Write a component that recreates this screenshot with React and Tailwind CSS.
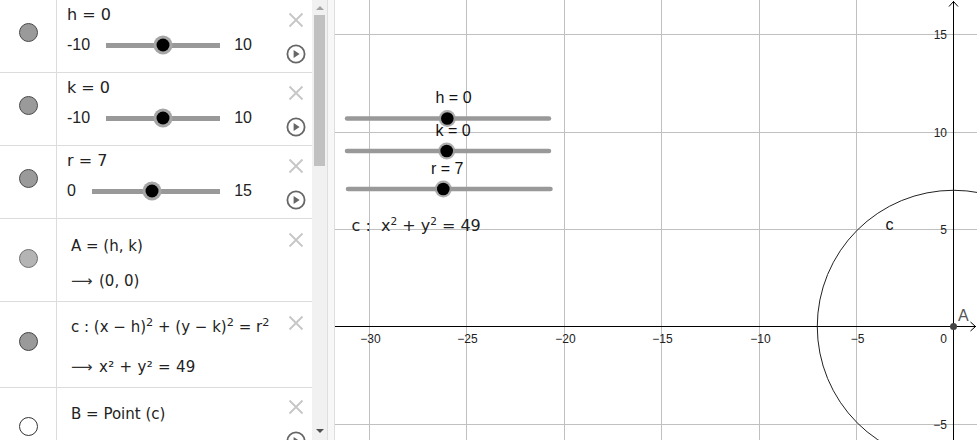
import React from 'react';

const sliders = [
  { name: 'h', value: 0, min: -10, max: 10 },
  { name: 'k', value: 0, min: -10, max: 10 },
  { name: 'r', value: 7, min: 0, max: 15 },
];

const Marble = ({ className }) => (
  <div className={`h-[19px] w-[19px] rounded-full border ${className}`} />
);

const CloseIcon = () => (
  <svg width="16" height="16" viewBox="0 0 16 16">
    <path d="M1.5 1.5 L14.5 14.5 M14.5 1.5 L1.5 14.5" stroke="#c6c6c6" strokeWidth="1.8" />
  </svg>
);

const PlayIcon = () => (
  <svg width="20" height="20" viewBox="0 0 20 20">
    <circle cx="10" cy="10" r="8.6" fill="none" stroke="#666" strokeWidth="1.8" />
    <path d="M7.6 6 L13.6 10 L7.6 14 Z" fill="#666" />
  </svg>
);

const SliderRow = ({ s }) => {
  const pct = ((s.value - s.min) / (s.max - s.min)) * 100;
  return (
    <div className="flex h-[73px] shrink-0 border-b border-[#dcdcdc]">
      <div className="flex w-[57px] shrink-0 justify-center border-r border-[#dcdcdc] pt-[23px] pl-[1px]">
        <Marble className="border-[#4a4a4a] bg-[#9a9a9a]" />
      </div>
      <div className="flex-1 pl-[10px] pt-[5px] text-[#222]">
        <div className="font-['DejaVu_Sans',sans-serif] text-[16px] leading-[20px]">
          {s.name} = {s.value}
        </div>
        <div className="mt-[10px] flex h-[20px] w-[185px] items-center font-['Liberation_Sans',Arial,sans-serif] text-[16px] leading-[20px]">
          <span>{s.min}</span>
          <div className="relative ml-[16px] mr-[14px] h-[5px] flex-1 bg-[#999]">
            <div
              className="absolute top-1/2 h-[13px] w-[13px] -translate-x-1/2 -translate-y-1/2 rounded-full bg-black ring-[3px] ring-[#a6a6a6]"
              style={{ left: `${pct}%` }}
            />
          </div>
          <span>{s.max}</span>
        </div>
      </div>
      <div className="flex w-[32px] shrink-0 flex-col items-center pt-[12px]">
        <CloseIcon />
        <div className="mt-[16px]">
          <PlayIcon />
        </div>
      </div>
    </div>
  );
};

const math = "font-['DejaVu_Sans',sans-serif] text-[15px] leading-[20px] text-[#222]";

const Arrow = () => (
  <span className="inline-block w-[28px] text-[#333]">⟶</span>
);

const AlgebraView = () => (
  <div className="flex w-[312px] shrink-0 flex-col overflow-hidden bg-white">
    {sliders.map((s) => (
      <SliderRow key={s.name} s={s} />
    ))}

    <div className="flex h-[83px] shrink-0 border-b border-[#dcdcdc]">
      <div className="flex w-[57px] shrink-0 justify-center border-r border-[#dcdcdc] pt-[30px] pl-[1px]">
        <Marble className="border-[#707070] bg-[#b4b4b4]" />
      </div>
      <div className={`flex-1 pl-[14px] pt-[17px] ${math}`}>
        <div>A = (h, k)</div>
        <div className="mt-[15px]">
          <Arrow />(0, 0)
        </div>
      </div>
      <div className="flex w-[32px] shrink-0 flex-col items-center pt-[13px]">
        <CloseIcon />
      </div>
    </div>

    <div className="flex h-[86px] shrink-0 border-b border-[#dcdcdc]">
      <div className="flex w-[57px] shrink-0 justify-center border-r border-[#dcdcdc] pt-[30px] pl-[1px]">
        <Marble className="border-[#444] bg-[#9a9a9a]" />
      </div>
      <div className={`flex-1 pl-[14px] pt-[15px] ${math}`}>
        <div>
          c : (x − h)<sup>2</sup> + (y − k)<sup>2</sup> = r<sup>2</sup>
        </div>
        <div className="mt-[20px] tracking-[0.3px]">
          <Arrow />x² + y² = 49
        </div>
      </div>
      <div className="flex w-[32px] shrink-0 flex-col items-center pt-[13px]">
        <CloseIcon />
      </div>
    </div>

    <div className="flex h-[90px] shrink-0">
      <div className="flex w-[57px] shrink-0 justify-center border-r border-[#dcdcdc] pt-[29px] pl-[1px]">
        <Marble className="border-[#333] bg-white" />
      </div>
      <div className={`flex-1 pl-[14px] pt-[16px] ${math}`}>
        <div>B = Point (c)</div>
      </div>
      <div className="flex w-[32px] shrink-0 flex-col items-center pt-[11px]">
        <CloseIcon />
        <div className="mt-[16px]">
          <PlayIcon />
        </div>
      </div>
    </div>
  </div>
);

const Scrollbar = () => (
  <div className="flex w-[15px] shrink-0 flex-col items-center bg-[#f1f1f1]">
    <div className="mt-[6px] h-0 w-0 border-x-[4px] border-b-[4px] border-x-transparent border-b-[#a3a3a3]" />
    <div className="mt-[5px] h-[151px] w-[11px] bg-[#c1c1c1]" />
    <div className="mt-auto mb-[7px] h-0 w-0 border-x-[4px] border-t-[4px] border-x-transparent border-t-[#505050]" />
  </div>
);

// graphics view coordinates
const OX = 618.5;
const OY = 326.5;
const U = 19.46;
const vx = [34, 131, 229, 326, 424, 521];
const xl = ['−30', '−25', '−20', '−15', '−10', '−5'];
const hy = [34, 132, 229, 424];
const yl = ['15', '10', '5', '−5'];

const GSlider = ({ y, x1, x2, tx, label, lx, ly }) => (
  <g>
    <line x1={x1} y1={y} x2={x2} y2={y} stroke="#999" strokeWidth="4.5" strokeLinecap="round" />
    <circle cx={tx} cy={y} r="8.5" fill="#9a9a9a" opacity="0.8" />
    <circle cx={tx} cy={y} r="6.3" fill="#000" />
    <text x={lx} y={ly} fontSize="16" fill="#111" fontFamily="'Liberation Sans', Arial, sans-serif">
      {label}
    </text>
  </g>
);

const GraphicsView = () => (
  <div className="flex-1 overflow-hidden bg-white">
    <svg width="642" height="440" viewBox="0 0 642 440">
      {vx.map((x) => (
        <line key={'v' + x} x1={x + 0.5} y1="0" x2={x + 0.5} y2="440" stroke="#c0c0c0" strokeWidth="1" />
      ))}
      {hy.map((y) => (
        <line key={'h' + y} x1="0" y1={y + 0.5} x2="642" y2={y + 0.5} stroke="#c0c0c0" strokeWidth="1" />
      ))}

      <line x1="0" y1={OY} x2="641" y2={OY} stroke="#000" strokeWidth="1" />
      <line x1={OX} y1="1" x2={OX} y2="440" stroke="#000" strokeWidth="1" />
      <path d={`M${OX - 4.5} 6.5 L${OX} 1.5 L${OX + 4.5} 6.5`} fill="none" stroke="#000" strokeWidth="1" />
      <path d="M635.5 322 L640.5 326.5 L635.5 331" fill="none" stroke="#000" strokeWidth="1" />

      <g fontFamily="'Liberation Sans', Arial, sans-serif" fontSize="12" fill="#222">
        {vx.map((x, i) => (
          <text key={'xl' + x} x={x + 1.5} y="343" textAnchor="middle">
            {xl[i]}
          </text>
        ))}
        <text x="608.5" y="343" textAnchor="middle">0</text>
        {hy.map((y, i) => (
          <text key={'yl' + y} x="612" y={y + 5} textAnchor="end">
            {yl[i]}
          </text>
        ))}
      </g>

      <circle cx={OX} cy={OY} r={7 * U} fill="none" stroke="#222" strokeWidth="1" />
      <text x="550.5" y="229.5" fontSize="16" fill="#111" fontFamily="'Liberation Sans', Arial, sans-serif">
        c
      </text>

      <circle cx={OX} cy={OY} r="3.5" fill="#444" />
      <text x="623" y="321" fontSize="16" fill="#555" fontFamily="'Liberation Sans', Arial, sans-serif">
        A
      </text>

      <GSlider y={118.5} x1={12} x2={214} tx={112.3} label="h = 0" lx={100.5} ly={103} />
      <GSlider y={151} x1={12} x2={214} tx={111.7} label="k = 0" lx={100.5} ly={136} />
      <GSlider y={189} x1={13} x2={215.5} tx={108.3} label="r = 7" lx={96} ly={174} />

      <text x="16.5" y="230.5" fontSize="16" fill="#222" fontFamily="'DejaVu Sans', sans-serif">
        {'c :\u00a0 x'}
        <tspan dy="-6" fontSize="10.5">2</tspan>
        <tspan dy="6">{'\u00a0+ y'}</tspan>
        <tspan dy="-6" fontSize="10.5">2</tspan>
        <tspan dy="6">{'\u00a0= 49'}</tspan>
      </text>
    </svg>
  </div>
);

export default function App() {
  return (
    <div className="flex h-[440px] w-[977px] overflow-hidden bg-white">
      <AlgebraView />
      <Scrollbar />
      <div className="w-[8px] shrink-0 border-x border-[#dedede] bg-[#f7f7f7]" />
      <GraphicsView />
    </div>
  );
}
